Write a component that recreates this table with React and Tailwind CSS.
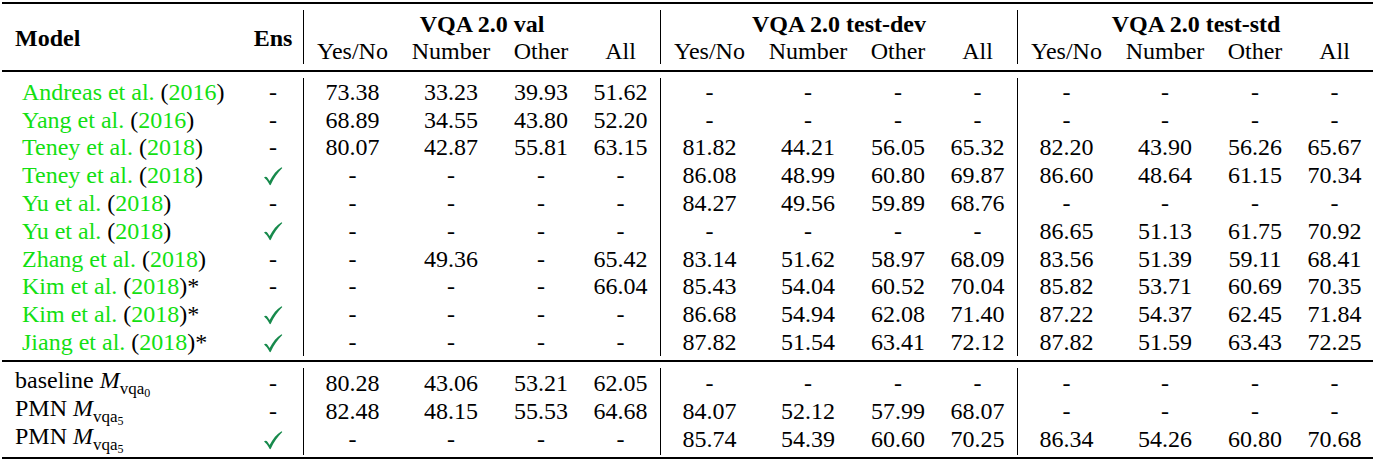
import React from 'react';

const GRID =
  'grid grid-cols-[243px_60px_98px_100px_80px_79px_98px_100px_80px_79px_98px_100px_80px_79px_3px]';

const rows = [
  { name: 'Andreas', year: '2016', ens: false, val: ['73.38', '33.23', '39.93', '51.62'], dev: ['-', '-', '-', '-'], std: ['-', '-', '-', '-'] },
  { name: 'Yang', year: '2016', ens: false, val: ['68.89', '34.55', '43.80', '52.20'], dev: ['-', '-', '-', '-'], std: ['-', '-', '-', '-'] },
  { name: 'Teney', year: '2018', ens: false, val: ['80.07', '42.87', '55.81', '63.15'], dev: ['81.82', '44.21', '56.05', '65.32'], std: ['82.20', '43.90', '56.26', '65.67'] },
  { name: 'Teney', year: '2018', ens: true, val: ['-', '-', '-', '-'], dev: ['86.08', '48.99', '60.80', '69.87'], std: ['86.60', '48.64', '61.15', '70.34'] },
  { name: 'Yu', year: '2018', ens: false, val: ['-', '-', '-', '-'], dev: ['84.27', '49.56', '59.89', '68.76'], std: ['-', '-', '-', '-'] },
  { name: 'Yu', year: '2018', ens: true, val: ['-', '-', '-', '-'], dev: ['-', '-', '-', '-'], std: ['86.65', '51.13', '61.75', '70.92'] },
  { name: 'Zhang', year: '2018', ens: false, val: ['-', '49.36', '-', '65.42'], dev: ['83.14', '51.62', '58.97', '68.09'], std: ['83.56', '51.39', '59.11', '68.41'] },
  { name: 'Kim', year: '2018', star: true, ens: false, val: ['-', '-', '-', '66.04'], dev: ['85.43', '54.04', '60.52', '70.04'], std: ['85.82', '53.71', '60.69', '70.35'] },
  { name: 'Kim', year: '2018', star: true, ens: true, val: ['-', '-', '-', '-'], dev: ['86.68', '54.94', '62.08', '71.40'], std: ['87.22', '54.37', '62.45', '71.84'] },
  { name: 'Jiang', year: '2018', star: true, ens: true, val: ['-', '-', '-', '-'], dev: ['87.82', '51.54', '63.41', '72.12'], std: ['87.82', '51.59', '63.43', '72.25'] },
];

const ours = [
  { label: 'baseline', sub: '0', ens: false, val: ['80.28', '43.06', '53.21', '62.05'], dev: ['-', '-', '-', '-'], std: ['-', '-', '-', '-'] },
  { label: 'PMN', sub: '5', ens: false, val: ['82.48', '48.15', '55.53', '64.68'], dev: ['84.07', '52.12', '57.99', '68.07'], std: ['-', '-', '-', '-'] },
  { label: 'PMN', sub: '5', ens: true, val: ['-', '-', '-', '-'], dev: ['85.74', '54.39', '60.60', '70.25'], std: ['86.34', '54.26', '60.80', '70.68'] },
];

function Cell({ children, line }) {
  return (
    <div className={`flex items-center justify-center whitespace-nowrap ${line ? 'border-l border-black' : ''}`}>
      {children}
    </div>
  );
}

// pifont-style check mark
function Check() {
  return (
    <svg width="20" height="20" viewBox="0 0 20 20" className="mt-[1px] text-[#178a4c]">
      <path
        fill="currentColor"
        d="M1 11.6C2.4 10.2 3.5 10.4 4.6 12.1L6.6 15.1C9.8 8.6 13.8 4.1 18.5 1.2L19.3 2C14.6 6.6 10.6 12.6 7.9 18.6C7.5 19.4 6.8 19.4 6.4 18.6C5 15.9 3.1 13.2 1 11.6Z"
      />
    </svg>
  );
}

function Group({ values }) {
  return (
    <>
      <Cell line>{values[0]}</Cell>
      <Cell>{values[1]}</Cell>
      <Cell>{values[2]}</Cell>
      <Cell>{values[3]}</Cell>
    </>
  );
}

function Row({ name, h, ens, r, indent }) {
  return (
    <div className={`${GRID} ${h}`}>
      <div className={`flex items-center whitespace-nowrap ${indent ? 'pl-[22px]' : 'pl-[15px]'}`}>{name}</div>
      <Cell>{ens ? <Check /> : '-'}</Cell>
      <Group values={r.val} />
      <Group values={r.dev} />
      <Group values={r.std} />
      <div />
    </div>
  );
}

export default function App() {
  return (
    <div className="h-[461px] w-[1377px] bg-white pt-[2px] font-['Liberation_Serif',serif] text-[24px] leading-none text-black">
      <div className="ml-[2px] mr-[4px] h-[2px] bg-black" />

      {/* header */}
      <div className={`${GRID} mt-[6px] grid-rows-[28px_26px]`}>
        <div className="row-span-2 flex items-center pl-[15px] pt-[2px] font-bold">Model</div>
        <div className="row-span-2 flex items-center justify-center pt-[2px] font-bold">Ens</div>
        <div className="col-span-4 flex items-center justify-center border-l border-black font-bold">VQA 2.0 val</div>
        <div className="col-span-4 flex items-center justify-center border-l border-black font-bold">VQA 2.0 test-dev</div>
        <div className="col-span-4 flex items-center justify-center border-l border-black font-bold">VQA 2.0 test-std</div>
        <div className="row-span-2" />
        {[0, 1, 2].map((g) => (
          <React.Fragment key={g}>
            <Cell line>Yes/No</Cell>
            <Cell>Number</Cell>
            <Cell>Other</Cell>
            <Cell>All</Cell>
          </React.Fragment>
        ))}
      </div>

      <div className="ml-[2px] mr-[4px] mt-[6px] h-[1.5px] bg-black" />

      <div className="mt-[6.5px]">
        {rows.map((r, i) => (
          <Row
            key={i}
            h="h-[27.8px]"
            indent
            ens={r.ens}
            r={r}
            name={
              <span>
                <span className="text-[#12e012]">{r.name} et al. </span>(
                <span className="text-[#12e012]">{r.year}</span>){r.star ? '*' : ''}
              </span>
            }
          />
        ))}
      </div>

      <div className="ml-[2px] mr-[4px] mt-[4.5px] h-[1.5px] bg-black" />

      <div className="mt-[6px]">
        {ours.map((r, i) => (
          <Row
            key={i}
            h="h-[28px]"
            ens={r.ens}
            r={r}
            name={
              <span>
                {r.label} <span className="italic">M</span>
                <span className="align-[-6px] text-[17px]">
                  vqa<span className="align-[-3px] text-[12px]">{r.sub}</span>
                </span>
              </span>
            }
          />
        ))}
      </div>

      <div className="ml-[2px] mr-[4px] mt-[5px] h-[2px] bg-black" />
    </div>
  );
}
